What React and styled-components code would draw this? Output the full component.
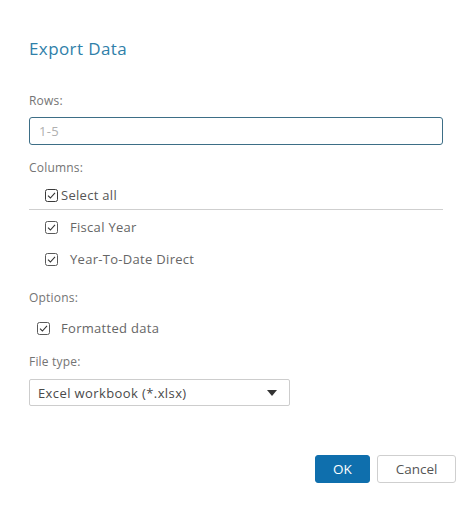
import styled, { createGlobalStyle } from 'styled-components';

const GlobalStyle = createGlobalStyle`
  body {
    margin: 0;
    background: #fff;
    font-family: "Open Sans", Lato, sans-serif;
  }
`;

const Dialog = styled.div`
  width: 471px;
  height: 522px;
  box-sizing: border-box;
  padding: 37px 28px 0 29px;
  display: flex;
  flex-direction: column;
`;

const Title = styled.h1`
  margin: 0;
  font-size: 17px;
  line-height: 24px;
  font-weight: 400;
  letter-spacing: 0.4px;
  color: #2f80a9;
`;

const Label = styled.div`
  font-size: 12px;
  line-height: 16px;
  letter-spacing: 0.2px;
  color: #747474;
  margin-top: ${(p) => p.$gap}px;
`;

const TextInput = styled.input`
  margin-top: 8px;
  height: 28px;
  box-sizing: border-box;
  border: 1px solid #3d6e86;
  border-radius: 3px;
  padding: 0 9px;
  font-family: inherit;
  font-size: 13px;
  letter-spacing: 0.3px;
  color: #444;
  outline: none;
  &::placeholder {
    color: #b0b0b0;
  }
`;

const CheckList = styled.div`
  display: flex;
  flex-direction: column;
  margin-top: ${(p) => p.$gap}px;
`;

const CheckRow = styled.label`
  display: flex;
  align-items: center;
  height: ${(p) => p.$h || 32}px;
  padding-left: ${(p) => p.$indent}px;
  gap: ${(p) => p.$spacing}px;
  font-size: 13px;
  letter-spacing: 0.3px;
  color: #666;
  ${(p) =>
    p.$divider &&
    `
    border-bottom: 1px solid #cfcfcf;
    padding-bottom: 2px;
    margin-bottom: 1px;
    box-sizing: content-box;
    color: #555;
  `}
`;

const Box = styled.span`
  width: 13px;
  height: 13px;
  box-sizing: border-box;
  border: 1px solid ${(p) => (p.$dark ? '#3a3a3a' : '#5a5a5a')};
  border-radius: 2.5px;
  display: inline-flex;
  align-items: center;
  justify-content: center;
  flex-shrink: 0;
`;

const Check = ({ dark }) => (
  <Box $dark={dark}>
    <svg width="11" height="11" viewBox="0 0 11 11">
      <path d="M2 5.6 L4.4 8 L9 2.8" fill="none" stroke="#333" strokeWidth="1.1" />
    </svg>
  </Box>
);

const Select = styled.div`
  margin-top: 9px;
  width: 261px;
  height: 27px;
  box-sizing: border-box;
  border: 1px solid #cdcdcd;
  border-radius: 2px;
  display: flex;
  align-items: center;
  justify-content: space-between;
  padding: 0 12px 0 8px;
  font-size: 13px;
  letter-spacing: 0.4px;
  color: #4a4a4a;
`;

const Arrow = styled.span`
  width: 0;
  height: 0;
  border-left: 5px solid transparent;
  border-right: 5px solid transparent;
  border-top: 6px solid #333;
`;

const Footer = styled.div`
  margin-top: 49px;
  margin-right: -13px;
  display: flex;
  justify-content: flex-end;
  gap: 7px;
`;

const Button = styled.button`
  height: 28px;
  min-width: ${(p) => (p.$primary ? 55 : 79)}px;
  box-sizing: border-box;
  border-radius: 3px;
  font-family: inherit;
  font-size: 13.5px;
  border: 1px solid ${(p) => (p.$primary ? '#0f6fad' : '#cfcfcf')};
  background: ${(p) => (p.$primary ? '#0f6fad' : '#fff')};
  color: ${(p) => (p.$primary ? '#fff' : '#555')};
  padding: 0 12px;
`;

export default function App() {
  return (
    <>
      <GlobalStyle />
      <Dialog>
        <Title>Export Data</Title>
        <Label $gap={32}>Rows:</Label>
        <TextInput placeholder="1-5" />
        <Label $gap={15}>Columns:</Label>
        <CheckList $gap={7}>
          <CheckRow $h={24} $indent={16} $spacing={3} $divider>
            <Check dark />
            Select all
          </CheckRow>
          <CheckRow $indent={16} $spacing={12}>
            <Check />
            Fiscal Year
          </CheckRow>
          <CheckRow $indent={16} $spacing={12}>
            <Check />
            Year-To-Date Direct
          </CheckRow>
        </CheckList>
        <Label $gap={15}>Options:</Label>
        <CheckList $gap={10}>
          <CheckRow $h={24} $indent={8} $spacing={11}>
            <Check />
            Formatted data
          </CheckRow>
        </CheckList>
        <Label $gap={14}>File type:</Label>
        <Select>
          Excel workbook (*.xlsx)
          <Arrow />
        </Select>
        <Footer>
          <Button $primary>OK</Button>
          <Button>Cancel</Button>
        </Footer>
      </Dialog>
    </>
  );
}
